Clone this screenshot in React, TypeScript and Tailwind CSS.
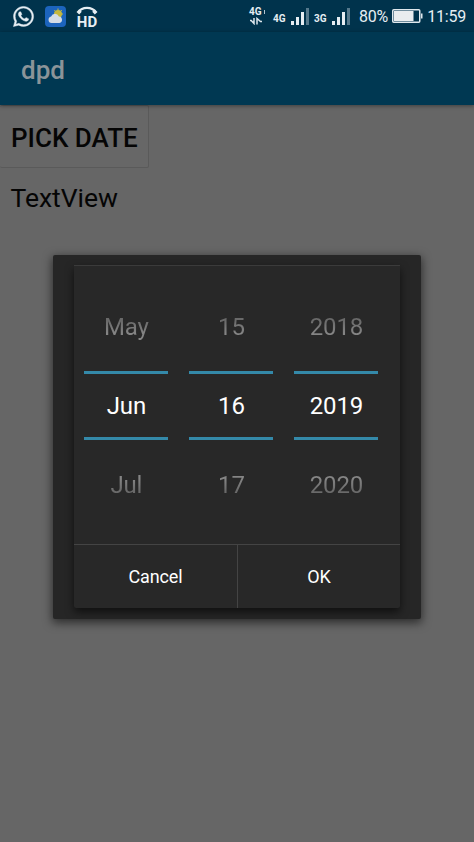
import { FaWhatsapp } from "react-icons/fa";

const WeatherIcon = () => (
  <svg className="ml-[10px] h-[21px] w-[21px]" viewBox="0 0 21 21">
    <rect width="21" height="21" rx="4" fill="#1c64bd" />
    <circle cx="13" cy="8" r="4" fill="#c5b83c" />
    <path d="M13 2.500v2M18 8h-1.500M16.800 4l-1.300 1.400M9.300 4.200l1.200 1.200" stroke="#c5b83c" strokeWidth="1" />
    <path
      d="M6.500 17a3.300 3.300 0 0 1-.4-6.500 4.200 4.200 0 0 1 7.800 0 3.300 3.300 0 0 1 .6 6.500z"
      fill="#d3dce6"
    />
  </svg>
);

const HdCallIcon = () => (
  <div className="ml-[10px] flex w-[22px] flex-col items-center">
    <svg className="h-[9px] w-[22px]" viewBox="0 0 22 9">
      <path d="M2.500 6C6 .5 16 .5 19.500 6" fill="none" stroke="#e6eef3" strokeWidth="2.200" />
      <path d="M.5 6 3 3.500l2.800 2.300L3.200 8.500zM21.500 6 19 3.500l-2.800 2.300L18.800 8.500z" fill="#e6eef3" />
    </svg>
    <span className="h-[12px] text-[15px] leading-[14px] font-bold">HD</span>
  </div>
);

const DataIcon = () => (
  <div className="flex w-[18px] flex-col">
    <span className="flex h-[8px] text-[10px] leading-[8px] font-bold">
      4G
      <i className="mt-[2px] ml-[2px] h-[4px] w-px bg-[#b5c6d0]" />
    </span>
    <svg className="mt-px h-[8px] w-[14px]" viewBox="0 0 14 8">
      <path d="M1 3.500h1.200L5 6.500V1M8 7.500V1.500l3.500 3h1.500" fill="none" stroke="#dce6ec" strokeWidth="1.500" />
    </svg>
  </div>
);

const SignalIcon = () => (
  <svg className="h-[17px] w-[18px]" viewBox="0 0 18 17">
    <path d="M0 13h3v4H0zM5 9h3v8H5zM10 4h3v13h-3z" fill="#e6eef3" />
    <path d="M15 0h3v17h-3z" fill="#55798c" />
  </svg>
);

const BatteryIcon = () => (
  <svg className="ml-[4px] h-[14px] w-[31px]" viewBox="0 0 31 14">
    <rect x=".75" y=".75" width="27" height="12.500" rx="1" fill="none" stroke="#dfe8ed" strokeWidth="1.500" />
    <path d="M2 2h19.500v10H2z" fill="#e9edef" />
    <path d="M29 4.500h1.500v5H29z" fill="#dfe8ed" />
  </svg>
);

const StatusBar = () => (
  <div className="flex h-8 items-center justify-between bg-[#00334c] pr-[8px] pl-[12px] text-[#e6eef3]">
    <div className="flex items-center">
      <FaWhatsapp className="h-[23px] w-[23px] stroke-current stroke-[10px]" />
      <WeatherIcon />
      <HdCallIcon />
    </div>
    <div className="flex items-center">
      <DataIcon />
      <span className="mt-[6px] ml-[6px] w-[18px] text-[10px] leading-[10px] font-bold">4G</span>
      <SignalIcon />
      <span className="mt-[6px] ml-[5px] w-[18px] text-[10px] leading-[10px] font-bold">3G</span>
      <SignalIcon />
      <span className="mt-px ml-[9px] text-[16px] leading-[20px] tracking-[-0.2px]">80%</span>
      <BatteryIcon />
      <span className="mt-px ml-[4px] text-[16px] leading-[20px] tracking-[-0.2px]">11:59</span>
    </div>
  </div>
);

const columns = [
  ["May", "Jun", "Jul"],
  ["15", "16", "17"],
  ["2018", "2019", "2020"],
];

const PickerColumn = ({ values }: { values: string[] }) => {
  const [previous, current, next] = values;
  return (
    <div className="flex w-[84px] flex-col text-center text-[24px] tracking-[-0.2px]">
      <div className="bg-linear-to-b from-[#6a6a6a] from-30% to-[#858585] to-70% bg-clip-text leading-[32px] text-transparent">
        {previous}
      </div>
      <div className="mt-[28px] h-[69px] border-y-3 border-[#3489a9] leading-[64px] text-white">{current}</div>
      <div className="mt-[29px] bg-linear-to-b from-[#858585] from-30% to-[#6a6a6a] to-70% bg-clip-text leading-[32px] text-transparent">
        {next}
      </div>
    </div>
  );
};

const DatePickerDialog = () => (
  <div className="absolute inset-0 flex justify-center pt-[255px]">
    <div className="h-[364px] w-[368px] rounded-[2px] bg-[#262626] px-[21px] pt-[10px] shadow-[0_3px_10px_1px_rgba(0,0,0,0.55)]">
      <div className="flex h-[343px] flex-col rounded-b-[2px] border-t border-[#3b3b3b] bg-[#282828] shadow-[0_4px_8px_rgba(0,0,0,0.6)]">
        <div className="flex h-[278px] gap-[21px] pt-[45px] pl-[10.400px]">
          {columns.map((values) => (
            <PickerColumn key={values[1]} values={values} />
          ))}
        </div>
        <div className="flex flex-1 border-t border-[#444] text-[18px] text-white">
          <button className="w-[164px] border-r border-[#444] tracking-[-0.100px]">Cancel</button>
          <button className="flex-1 tracking-[-0.100px]">OK</button>
        </div>
      </div>
    </div>
  </div>
);

const App = () => {
  return (
    <div className="relative h-[842px] w-[474px] overflow-hidden bg-[#666] font-[Roboto,sans-serif]">
      <StatusBar />
      <header className="relative flex h-[73px] items-center bg-[#003852] pt-[2px] pl-[21px] shadow-[0_1px_4px_rgba(0,0,0,0.4)]">
        <h1 className="text-[26px] leading-[30px] font-medium text-[#8b9499]">dpd</h1>
      </header>
      <main className="flex flex-col items-start text-[26px] text-[#050505]">
        <button className="h-[63px] w-[149px] rounded-[2px] border border-l-0 border-[#5a5a5a] bg-[#676767] pt-[3px] pl-[11px] text-left font-medium whitespace-nowrap">
          PICK DATE
        </button>
        <p className="mt-[14px] ml-[10.500px] text-[26.500px] leading-[32px] tracking-[-0.050px]">TextView</p>
      </main>
      <DatePickerDialog />
    </div>
  );
};

export default App;
